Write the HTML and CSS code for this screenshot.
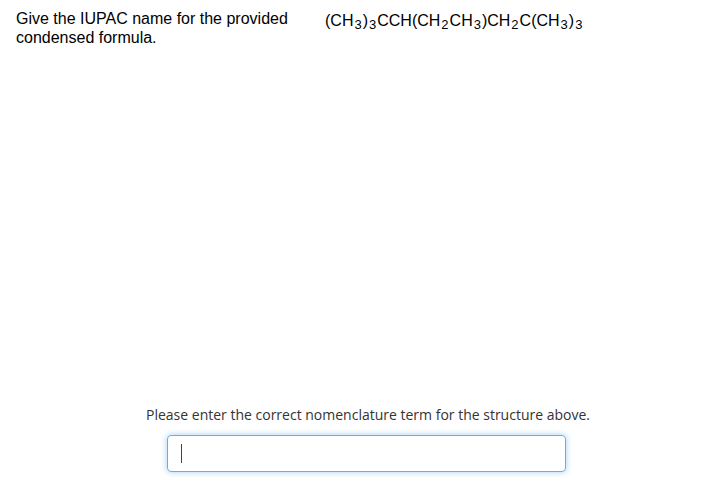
FILE: index.html
```html
<!DOCTYPE html>
<html>
<head>
<meta charset="utf-8">
<link rel="stylesheet" href="styles.css">
</head>
<body>
<div class="page">
  <div class="question">
    <div class="prompt">Give the IUPAC name for the provided condensed formula.</div>
    <div class="formula">(CH<sub>3</sub>)<sub>3</sub>CCH(CH<sub>2</sub>CH<sub>3</sub>)CH<sub>2</sub>C(CH<sub>3</sub>)<sub>3</sub></div>
  </div>
  <div class="answer">
    <div class="instruction">Please enter the correct nomenclature term for the structure above.</div>
    <div class="field"><span class="caret"></span></div>
  </div>
</div>
</body>
</html>
```
FILE: styles.css
```css
html, body {
  margin: 0;
  padding: 0;
  background: #fff;
}
.page {
  width: 704px;
  height: 486px;
  display: flex;
  flex-direction: column;
}
.question {
  display: flex;
  padding: 9px 0 0 16px;
  height: 390px;
  box-sizing: border-box;
}
.prompt {
  width: 290px;
  font-family: "Liberation Sans", Arial, sans-serif;
  font-size: 16px;
  line-height: 19px;
  color: #000;
}
.formula {
  margin-left: 19px;
  padding-top: 2px;
  font-family: "Liberation Sans", Arial, sans-serif;
  font-size: 16px;
  line-height: 19px;
  color: #000;
}
.formula sub {
  font-size: 13px;
  line-height: 0;
  vertical-align: -3px;
  margin: 0 1px;
}
.answer {
  display: flex;
  flex-direction: column;
  align-items: flex-start;
  padding-left: 146px;
  padding-top: 15px;
}
.instruction {
  font-family: "Open Sans", sans-serif;
  font-size: 14px;
  line-height: 19px;
  color: #333;
}
.field {
  margin-top: 11px;
  margin-left: 21px;
  width: 399px;
  height: 37px;
  box-sizing: border-box;
  border: 1px solid #66afe9;
  border-radius: 4px;
  box-shadow: 0 0 6px rgba(102, 175, 233, 0.6);
  display: flex;
  align-items: center;
  padding-left: 13px;
}
.caret {
  width: 1px;
  height: 19px;
  background: #444;
}
```
